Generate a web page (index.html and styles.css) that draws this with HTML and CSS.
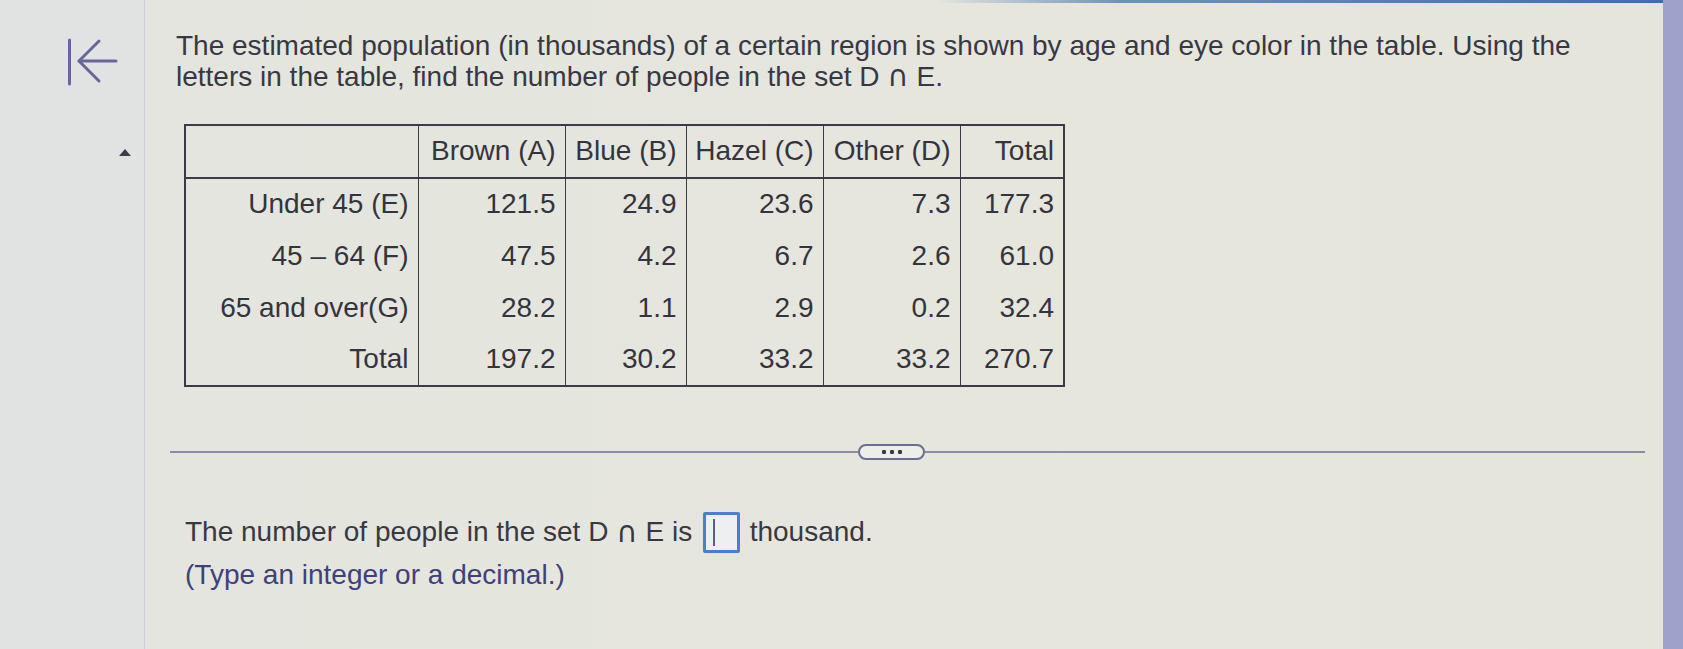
FILE: index.html
```html
<!DOCTYPE html>
<html lang="en">
<head>
<meta charset="utf-8">
<title>Set intersection question</title>
<link rel="stylesheet" href="styles.css">
</head>
<body>
<div class="page">
  <aside class="sidebar">
    <svg class="back" width="52" height="48" viewBox="0 0 52 48" aria-label="Back">
      <line x1="3.5" y1="2" x2="3.5" y2="46" stroke="#66669a" stroke-width="3" stroke-linecap="round"/>
      <line x1="13" y1="23" x2="50" y2="23" stroke="#66669a" stroke-width="3" stroke-linecap="round"/>
      <polyline points="33,3 13,23 33,43" fill="none" stroke="#66669a" stroke-width="3" stroke-linecap="round" stroke-linejoin="round"/>
    </svg>
    <span class="caret"></span>
  </aside>
  <main class="main">
    <div class="topbar"></div>
    <p class="question">The estimated population (in thousands) of a certain region is shown by age and eye color in the table. Using the<br>letters in the table, find the number of people in the set D <span class="op">&#8745;</span> E.</p>
    <table class="data">
      <colgroup>
        <col class="c0"><col class="c1"><col class="c2"><col class="c3"><col class="c4"><col class="c5">
      </colgroup>
      <thead>
        <tr><th></th><th>Brown (A)</th><th>Blue (B)</th><th>Hazel (C)</th><th>Other (D)</th><th>Total</th></tr>
      </thead>
      <tbody>
        <tr><td>Under 45 (E)</td><td>121.5</td><td>24.9</td><td>23.6</td><td>7.3</td><td>177.3</td></tr>
        <tr><td>45 &#8211; 64 (F)</td><td>47.5</td><td>4.2</td><td>6.7</td><td>2.6</td><td>61.0</td></tr>
        <tr><td>65 and over(G)</td><td>28.2</td><td>1.1</td><td>2.9</td><td>0.2</td><td>32.4</td></tr>
        <tr><td>Total</td><td>197.2</td><td>30.2</td><td>33.2</td><td>33.2</td><td>270.7</td></tr>
      </tbody>
    </table>
    <div class="divider">
      <span class="seg seg-left"></span>
      <span class="more"><i></i><i></i><i></i></span>
      <span class="seg seg-right"></span>
    </div>
    <p class="answer">The number of people in the set D <span class="op">&#8745;</span> E is <span class="input"><span class="cursor"></span></span> thousand.</p>
    <p class="hint">(Type an integer or a decimal.)</p>
  </main>
  <div class="edge"></div>
</div>
</body>
</html>
```

FILE: styles.css
```css
html, body {
  margin: 0;
  padding: 0;
}

body {
  width: 1683px;
  height: 649px;
  overflow: hidden;
  background: #e3e4dc;
  font-family: "Liberation Sans", Arial, sans-serif;
  color: #34343e;
}

.page {
  display: flex;
  height: 649px;
}

.sidebar {
  width: 145px;
  flex: none;
  background: #e1e3e3;
  border-right: 1px solid #cbcfd8;
  display: flex;
  flex-direction: column;
  align-items: flex-start;
  padding: 38px 0 0 66px;
  box-sizing: border-box;
}

.back {
  display: block;
}

.caret {
  display: block;
  width: 0;
  height: 0;
  margin: 63px 0 0 53px;
  border-left: 6px solid transparent;
  border-right: 6px solid transparent;
  border-bottom: 7px solid #3e3e48;
}

.main {
  flex: 1;
  padding-left: 31px;
  background: linear-gradient(90deg, #e4e5de 0%, #e6e6dd 60%, #e5e5db 100%);
}

.topbar {
  height: 3px;
  margin-left: 760px;
  margin-right: -15px;
  background: linear-gradient(90deg, rgba(58, 110, 176, 0) 0%, rgba(58, 110, 176, 0.7) 25%, #3a6eb0 100%);
}

.op {
  font-family: "DejaVu Sans", sans-serif;
  font-size: 1.05em;
  vertical-align: -0.5px;
}

.question {
  margin: 28px 0 0;
  font-size: 28px;
  line-height: 30px;
  white-space: nowrap;
  color: #383844;
}

.data {
  margin: 32px 0 0 8px;
  border-collapse: collapse;
  border: 2px solid #3b3a46;
  table-layout: fixed;
  font-size: 28px;
  color: #34343e;
}

.c0 { width: 233px; }
.c1 { width: 147px; }
.c2 { width: 121px; }
.c3 { width: 137px; }
.c4 { width: 137px; }
.c5 { width: 104px; }

.data th,
.data td {
  border: 1px solid #3b3a46;
  text-align: right;
  padding: 0 9px 0 0;
  font-weight: normal;
  white-space: nowrap;
}

.data thead tr {
  height: 53px;
}

.data thead th {
  border-bottom: 2px solid #3b3a46;
}

.data tbody tr {
  height: 52px;
}

.data tbody td {
  border-top: none;
  border-bottom: none;
}

.divider {
  display: flex;
  align-items: center;
  margin: 57px 18px 0 -6px;
  height: 16px;
}

.seg {
  height: 2px;
  background: #8b8ca8;
}

.seg-left {
  width: 688px;
  flex: none;
}

.seg-right {
  flex: 1;
}

.more {
  flex: none;
  width: 67px;
  height: 16px;
  box-sizing: border-box;
  border: 2px solid #6c6d93;
  border-radius: 8px;
  background: #eeeee8;
  display: flex;
  align-items: center;
  justify-content: center;
  gap: 4px;
}

.more i {
  display: block;
  width: 4px;
  height: 4px;
  border-radius: 1px;
  background: #3a3a4a;
}

.answer {
  display: flex;
  align-items: center;
  height: 41px;
  margin: 52px 0 0 9px;
  font-size: 28px;
  line-height: 30px;
  white-space: pre;
  color: #383844;
}

.input {
  display: flex;
  align-items: center;
  width: 37px;
  height: 41px;
  box-sizing: border-box;
  margin: 0 2px 0 3px;
  border: 3px solid #4a7ecf;
  border-radius: 2px;
  background: #edeff0;
  padding-left: 7px;
}

.cursor {
  display: block;
  width: 2px;
  height: 27px;
  background: #5a5a9a;
}

.hint {
  margin: 7px 0 0 9px;
  font-size: 28px;
  line-height: 30px;
  color: #40407a;
}

.edge {
  width: 20px;
  flex: none;
  background: #9ea1c9;
}
```
